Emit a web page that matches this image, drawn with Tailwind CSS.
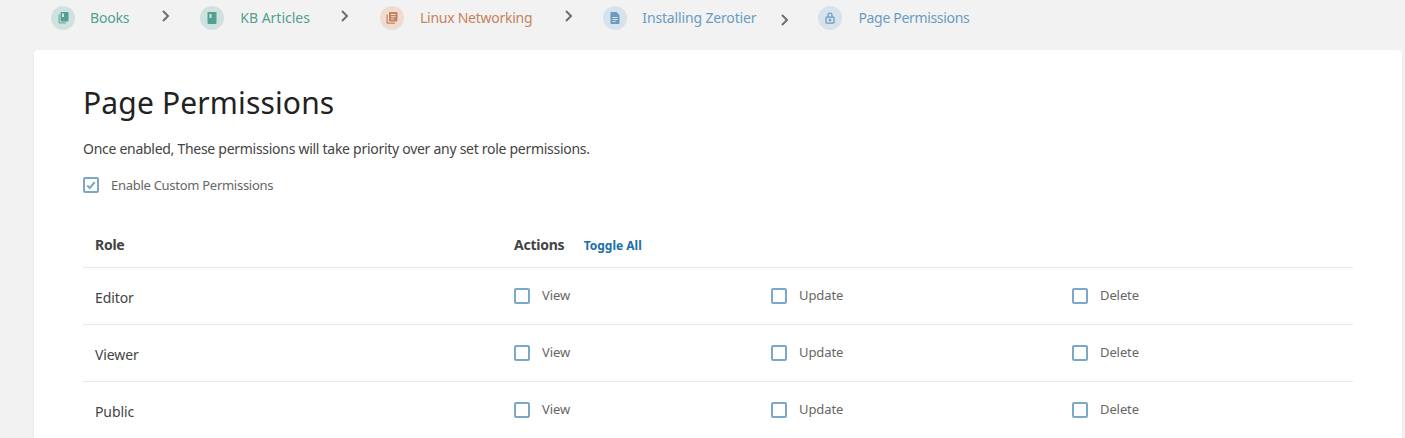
<!DOCTYPE html>
<html lang="en">
<head>
    <meta charset="UTF-8">
    <title>Page Permissions</title>
    <script src="https://cdn.jsdelivr.net/npm/@tailwindcss/browser@4"></script>
</head>
<body class="bg-[#f2f2f2] font-['Noto_Sans',sans-serif] h-[438px] overflow-hidden">
    <!-- Breadcrumbs -->
    <nav class="flex items-center h-[36px] pl-[51px] text-[14px] tracking-[-0.2px]">
        <a class="flex items-center text-[#529f94]">
            <span class="w-6 h-6 rounded-full bg-[#cfe2df] flex items-center justify-center">
                <svg class="w-[12px] h-[12px]" viewBox="0 0 24 24" fill="currentColor"><path d="M9 0h12a2 2 0 0 1 2 2v15a2 2 0 0 1-2 2H9a2 2 0 0 1-2-2V2a2 2 0 0 1 2-2z"/><path fill="#cfe2df" d="M10 3h4v7h-4z"/><path opacity="0.75" d="M3 5v16a2 2 0 0 0 2 2h13v-2.500H6.500A1 1 0 0 1 5.500 19.500V5z"/></svg>
            </span>
            <span class="ml-[15px] pb-[2px]">Books</span>
        </a>
        <svg class="w-[10px] h-[12px] ml-[32px] mb-[4px] text-[#6e6e6e]" viewBox="0 0 10 12" fill="none" stroke="currentColor" stroke-width="2"><path d="M2 1l5 5-5 5"/></svg>
        <a class="flex items-center text-[#529f94] ml-[29px]">
            <span class="w-6 h-6 rounded-full bg-[#cfe2df] flex items-center justify-center">
                <svg class="w-[12px] h-[12px]" viewBox="0 0 24 24" fill="currentColor"><path d="M5 0h14a2 2 0 0 1 2 2v20a2 2 0 0 1-2 2H5a2 2 0 0 1-2-2V2a2 2 0 0 1 2-2z"/><path fill="#cfe2df" d="M7 4h4v8H7z"/></svg>
            </span>
            <span class="ml-[16px] pb-[2px] tracking-[0px]">KB Articles</span>
        </a>
        <svg class="w-[10px] h-[12px] ml-[30px] mb-[4px] text-[#6e6e6e]" viewBox="0 0 10 12" fill="none" stroke="currentColor" stroke-width="2"><path d="M2 1l5 5-5 5"/></svg>
        <a class="flex items-center text-[#c6825e] ml-[30px]">
            <span class="w-6 h-6 rounded-full bg-[#eedcd1] flex items-center justify-center">
                <svg class="w-[12px] h-[12px]" viewBox="0 0 24 24" fill="currentColor"><path fill-rule="evenodd" d="M8 0h13a2 2 0 0 1 2 2v15a2 2 0 0 1-2 2H8a2 2 0 0 1-2-2V2a2 2 0 0 1 2-2zm2 4v2h9V4zm0 4.500v2h9v-2zm0 4.500v2h6v-2z"/><path d="M1 5h2.500v15a1 1 0 0 0 1 1H18v2.500H3a2 2 0 0 1-2-2z"/></svg>
            </span>
            <span class="ml-[16px] pb-[2px] tracking-[-0.26px]">Linux Networking</span>
        </a>
        <svg class="w-[10px] h-[12px] ml-[32px] mb-[4px] text-[#6e6e6e]" viewBox="0 0 10 12" fill="none" stroke="currentColor" stroke-width="2"><path d="M2 1l5 5-5 5"/></svg>
        <a class="flex items-center text-[#6a9cc2] ml-[29px]">
            <span class="w-6 h-6 rounded-full bg-[#d6e3ec] flex items-center justify-center">
                <svg class="w-[12px] h-[12px]" viewBox="0 0 24 24" fill="currentColor"><path fill-rule="evenodd" d="M5 0h10l6 6v16a2 2 0 0 1-2 2H5a2 2 0 0 1-2-2V2a2 2 0 0 1 2-2zm2 10v2h10v-2zm0 4v2h10v-2zm0 4v2h6v-2z"/></svg>
            </span>
            <span class="ml-[15px] pb-[2px] tracking-[-0.15px]">Installing Zerotier</span>
        </a>
        <svg class="w-[10px] h-[12px] ml-[24px] mt-[3px] text-[#6e6e6e]" viewBox="0 0 10 12" fill="none" stroke="currentColor" stroke-width="2"><path d="M2 1l5 5-5 5"/></svg>
        <a class="flex items-center text-[#6a9cc2] ml-[28px]">
            <span class="w-6 h-6 rounded-full bg-[#d6e3ec] flex items-center justify-center">
                <svg class="w-[12px] h-[12px]" viewBox="0 0 24 24" fill="none" stroke="currentColor" stroke-width="2.500"><rect x="4" y="10" width="16" height="12" rx="1.500"/><path d="M8 10V6a4 4 0 0 1 8 0v4"/><circle cx="12" cy="16" r="1.500" fill="currentColor"/></svg>
            </span>
            <span class="ml-[16px] pb-[2px] tracking-[-0.33px]">Page Permissions</span>
        </a>
    </nav>

    <!-- Card -->
    <main class="mt-[14px] ml-[34px] mr-[3px] bg-white rounded-[4px] shadow-[0_1px_4px_-1px_rgba(0,0,0,0.08)] pt-[33px] pl-[49px] h-[500px]">
        <h1 class="text-[30px] leading-[40px] text-[#222222] tracking-[0.15px]">Page Permissions</h1>
        <p class="mt-[16px] text-[14px] leading-[20px] text-[#444444] tracking-[-0.28px]">Once enabled, These permissions will take priority over any set role permissions.</p>
        <label class="flex items-center mt-[16px] text-[13px] leading-[20px] text-[#666666] tracking-[-0.28px]">
            <span class="w-4 h-4 rounded-[2px] border-2 border-[#7ba7c9] flex items-center justify-center">
                <svg class="w-[10px] h-[10px]" viewBox="0 0 12 12" fill="none" stroke="#7ba7c9" stroke-width="2.500"><path d="M1.500 6.500l3 3 6-7"/></svg>
            </span>
            <span class="ml-[12px]">Enable Custom Permissions</span>
        </label>

        <table class="w-[1270px] mt-[28px] table-fixed border-collapse text-[#444444]">
            <colgroup>
                <col class="w-[431px]">
                <col class="w-[257px]">
                <col class="w-[301px]">
                <col>
            </colgroup>
            <thead>
                <tr class="h-[44px] border-b border-[#e8e8e8] text-[14px] font-bold tracking-[-0.25px]">
                    <th class="pl-3 text-left">Role</th>
                    <th class="text-left" colspan="3">
                        Actions
                        <a class="ml-[16px] text-[12px] text-[#206ea7] tracking-[0px]">Toggle All</a>
                    </th>
                </tr>
            </thead>
            <tbody class="text-[13px] text-[#666666] tracking-[-0.1px]">
                <tr class="h-[57px] border-b border-[#e8e8e8]">
                    <td class="pl-3 pt-[3px] text-[14px] text-[#444444]">Editor</td>
                    <td><label class="flex items-center"><span class="w-4 h-4 rounded-[2px] border-2 border-[#7ba7c9]"></span><span class="ml-[12px]">View</span></label></td>
                    <td><label class="flex items-center"><span class="w-4 h-4 rounded-[2px] border-2 border-[#7ba7c9]"></span><span class="ml-[12px]">Update</span></label></td>
                    <td><label class="flex items-center"><span class="w-4 h-4 rounded-[2px] border-2 border-[#7ba7c9]"></span><span class="ml-[12px]">Delete</span></label></td>
                </tr>
                <tr class="h-[57px] border-b border-[#e8e8e8]">
                    <td class="pl-3 pt-[3px] text-[14px] text-[#444444]">Viewer</td>
                    <td><label class="flex items-center"><span class="w-4 h-4 rounded-[2px] border-2 border-[#7ba7c9]"></span><span class="ml-[12px]">View</span></label></td>
                    <td><label class="flex items-center"><span class="w-4 h-4 rounded-[2px] border-2 border-[#7ba7c9]"></span><span class="ml-[12px]">Update</span></label></td>
                    <td><label class="flex items-center"><span class="w-4 h-4 rounded-[2px] border-2 border-[#7ba7c9]"></span><span class="ml-[12px]">Delete</span></label></td>
                </tr>
                <tr class="h-[57px] border-b border-[#e8e8e8]">
                    <td class="pl-3 pt-[3px] text-[14px] text-[#444444]">Public</td>
                    <td><label class="flex items-center"><span class="w-4 h-4 rounded-[2px] border-2 border-[#7ba7c9]"></span><span class="ml-[12px]">View</span></label></td>
                    <td><label class="flex items-center"><span class="w-4 h-4 rounded-[2px] border-2 border-[#7ba7c9]"></span><span class="ml-[12px]">Update</span></label></td>
                    <td><label class="flex items-center"><span class="w-4 h-4 rounded-[2px] border-2 border-[#7ba7c9]"></span><span class="ml-[12px]">Delete</span></label></td>
                </tr>
            </tbody>
        </table>
    </main>
</body>
</html>
